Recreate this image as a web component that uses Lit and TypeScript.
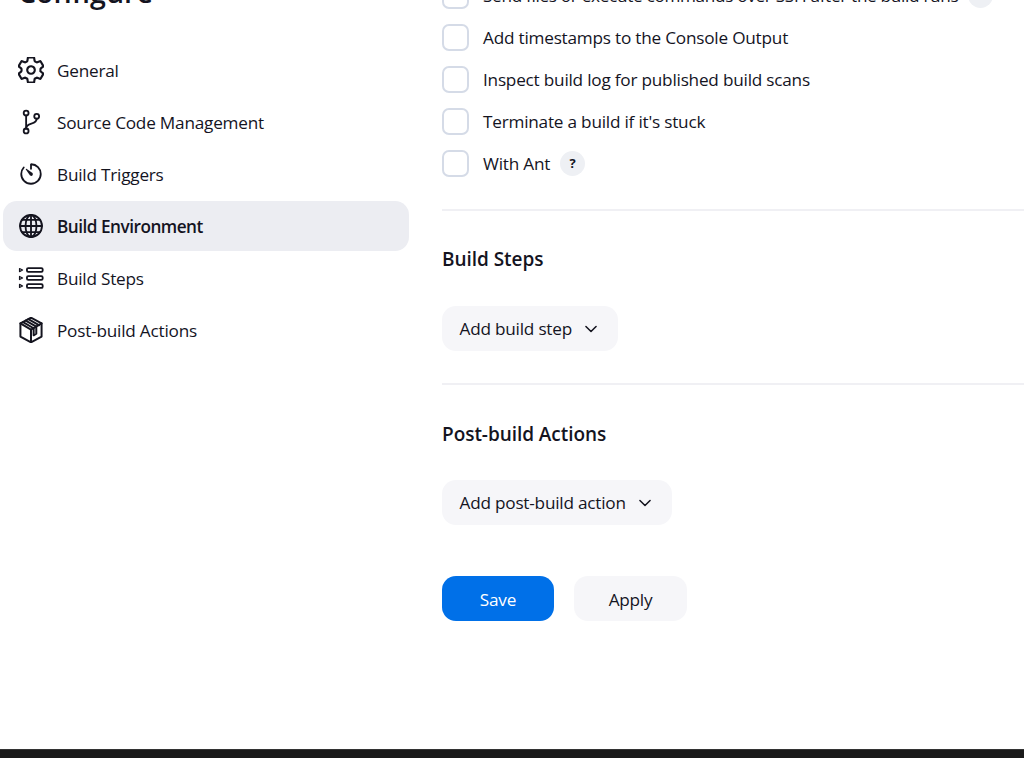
import { LitElement, html, css, svg } from "lit";
import { customElement } from "lit/decorators.js";

const icons: Record<string, unknown> = {
  gear: svg`<path d="M262.29 192.31a64 64 0 1 0 57.4 57.4 64.13 64.13 0 0 0-57.4-57.4zM416.39 256a154.34 154.34 0 0 1-1.53 20.79l45.21 35.46a10.81 10.81 0 0 1 2.45 13.75l-42.77 74a10.81 10.81 0 0 1-13.14 4.59l-44.9-18.08a16.11 16.11 0 0 0-15.17 1.75A164.48 164.48 0 0 1 325 400.8a15.94 15.94 0 0 0-8.82 12.14l-6.73 47.89a11.08 11.08 0 0 1-10.68 9.17h-85.54a11.11 11.11 0 0 1-10.69-8.87l-6.72-47.82a16.07 16.07 0 0 0-9-12.22 155.3 155.3 0 0 1-21.46-12.57 16 16 0 0 0-15.11-1.71l-44.89 18.07a10.81 10.81 0 0 1-13.14-4.58l-42.77-74a10.8 10.8 0 0 1 2.45-13.75l38.21-30a16.05 16.05 0 0 0 6-14.08c-.36-4.17-.58-8.33-.58-12.5s.21-8.27.58-12.35a16 16 0 0 0-6.07-13.94l-38.19-30A10.81 10.81 0 0 1 49.48 186l42.77-74a10.81 10.81 0 0 1 13.14-4.59l44.9 18.08a16.11 16.11 0 0 0 15.17-1.75A164.48 164.48 0 0 1 187 111.2a15.94 15.94 0 0 0 8.82-12.14l6.73-47.89A11.08 11.08 0 0 1 213.23 42h85.54a11.11 11.11 0 0 1 10.69 8.87l6.72 47.82a16.07 16.07 0 0 0 9 12.22 155.3 155.3 0 0 1 21.46 12.57 16 16 0 0 0 15.11 1.71l44.89-18.07a10.81 10.81 0 0 1 13.14 4.58l42.77 74a10.8 10.8 0 0 1-2.45 13.75l-38.21 30a16.05 16.05 0 0 0-6.05 14.08c.33 4.14.55 8.3.55 12.47z"/>`,
  branch: svg`<circle cx="160" cy="80" r="48"/><circle cx="160" cy="432" r="48"/><path d="M160 384V128"/><circle cx="368" cy="144" r="48"/><path d="M368 192c0 128-208 64-208 192"/>`,
  timer: svg`<path d="M112.91 128A191.85 191.85 0 0 0 64 254c-1.18 106.35 85.65 193.8 192 194 106.2.2 192-85.83 192-192 0-104.54-83.55-189.61-187.5-192a4.36 4.36 0 0 0-4.5 4.37V152"/><path d="M233.38 278.63l-79-113a8.13 8.13 0 0 1 11.32-11.32l113 79a32.5 32.5 0 0 1-37.25 53.26 33.21 33.21 0 0 1-8.07-7.94z" fill="currentColor" stroke="none"/>`,
  globe: svg`<circle cx="256" cy="256" r="216"/><ellipse cx="256" cy="256" rx="108" ry="216"/><path d="M256 40v432M40 256h432M82 136h348M82 376h348"/>`,
  steps: svg`<rect x="176" y="60" width="310" height="76" rx="26"/><rect x="176" y="218" width="310" height="76" rx="26"/><rect x="176" y="376" width="310" height="76" rx="26"/><path stroke-width="24" d="M30 70l60 30-60 30zM30 226l60 30-60 30zM30 382l60 30-60 30z"/>`,
  cube: svg`<path d="M256 32l192 104v240L256 480 64 376V136z"/><path d="M64 136l192 112 192-112M256 248v232"/><path d="M160 84l192 112v128l-48 28V224L112 112"/><path d="M208 58l192 110"/>`,
};

const boxes: Record<string, string> = {
  gear: "36 36 440 440",
  cube: "20 20 472 472",
};

@customElement("app-root")
export class AppRoot extends LitElement {
  static styles = css`
    :host {
      display: block;
      height: 758px;
      overflow: hidden;
      background: #fff;
      color: #14141f;
      font-family: "Open Sans", "Noto Sans", sans-serif;
      font-size: 17.2px;
      letter-spacing: -0.22px;
    }
    .page {
      display: flex;
      flex-direction: column;
      height: 758px;
    }
    .content {
      flex: 1;
      display: flex;
      min-height: 0;
      overflow: hidden;
    }
    .side {
      width: 406px;
      margin: 0 33px 0 3px;
      flex: none;
      display: flex;
      flex-direction: column;
      gap: 2px;
    }
    h1 {
      margin: -28px 0 31px 15px;
      font-size: 28.6px;
      line-height: 40px;
      font-weight: 600;
      height: 40px;
      letter-spacing: 0;
      color: #14141f;
    }
    .nav {
      display: flex;
      align-items: center;
      gap: 13px;
      height: 50px;
      padding-left: 15px;
      border-radius: 14px;
    }
    .nav.on {
      background: #ecedf2;
      font-weight: 600;
      letter-spacing: -0.5px;
    }
    .nav svg {
      width: 26px;
      height: 26px;
      flex: none;
      fill: none;
      stroke: currentColor;
      stroke-width: 36;
      stroke-linecap: round;
      stroke-linejoin: round;
    }
    .main {
      flex: 1;
      min-width: 0;
      display: flex;
      flex-direction: column;
      align-items: flex-start;
      margin-top: -26px;
    }
    .check {
      display: flex;
      align-items: center;
      gap: 14px;
      height: 42px;
      white-space: nowrap;
    }
    .box {
      width: 23px;
      height: 23px;
      border: 2px solid #d5dbe7;
      border-radius: 7px;
      flex: none;
    }
    .send {
      letter-spacing: -0.32px;
    }
    .help {
      width: 25px;
      height: 25px;
      border-radius: 50%;
      background: #eef0f4;
      font-size: 13px;
      font-weight: 700;
      display: flex;
      align-items: center;
      justify-content: center;
      margin-left: -4px;
      letter-spacing: 0;
    }
    hr {
      width: 100%;
      height: 2px;
      border: 0;
      margin: 0;
      background: #f0f0f4;
    }
    h2 {
      font-size: 19px;
      line-height: 26px;
      font-weight: 600;
      letter-spacing: -0.05px;
      margin: 0;
    }
    .btn {
      display: flex;
      align-items: center;
      justify-content: center;
      height: 45px;
      border-radius: 14px;
      background: #f6f6f9;
      color: #14141f;
    }
    .drop {
      gap: 10px;
      padding: 0 18px 0 17.5px;
    }
    .drop svg {
      width: 18px;
      height: 18px;
      fill: none;
      stroke: currentColor;
      stroke-width: 44;
      stroke-linecap: round;
      stroke-linejoin: round;
    }
    .s1 { margin-top: 25px; }
    .s2 { margin-top: 35px; }
    .b1 { margin-top: 34px; }
    .s3 { margin-top: 32px; }
    .s4 { margin-top: 36px; }
    .b2 { margin-top: 33px; }
    .actions {
      display: flex;
      gap: 20px;
      margin-top: 51px;
    }
    .actions .btn {
      box-sizing: border-box;
      padding-top: 1px;
    }
    .save {
      width: 112px;
      background: #0070e8;
      color: #fff;
      font-weight: 500;
    }
    .apply {
      width: 113px;
    }
    footer {
      height: 9px;
      flex: none;
      background: #1a1a1a;
      border-top: 1px solid #333;
      box-sizing: border-box;
    }
  `;

  render() {
    const nav = [
      ["gear", "General"],
      ["branch", "Source Code Management"],
      ["timer", "Build Triggers"],
      ["globe", "Build Environment"],
      ["steps", "Build Steps"],
      ["cube", "Post-build Actions"],
    ];
    const checks = [
      "Send files or execute commands over SSH after the build runs",
      "Add timestamps to the Console Output",
      "Inspect build log for published build scans",
      "Terminate a build if it's stuck",
    ];
    const chev = html`<svg viewBox="0 0 512 512"><path d="M112 184l144 144 144-144" /></svg>`;
    return html`<div class="page">
      <div class="content">
        <aside class="side">
          <h1>Configure</h1>
          ${nav.map(
            ([i, t]) => html`<div class="nav ${t === "Build Environment" ? "on" : ""}">
              <svg viewBox="${boxes[i] ?? "0 0 512 512"}">${icons[i]}</svg><span>${t}</span>
            </div>`,
          )}
        </aside>
        <main class="main">
          ${checks.map(
            (t, i) => html`<div class="check"><span class="box"></span><span class="${i === 0 ? "send" : ""}">${t}</span>${i === 0 ? html`<span class="help">?</span>` : ""}</div>`,
          )}
          <div class="check"><span class="box"></span><span>With Ant</span><span class="help">?</span></div>
          <hr class="s1" />
          <h2 class="s2">Build Steps</h2>
          <div class="btn drop b1">Add build step ${chev}</div>
          <hr class="s3" />
          <h2 class="s4">Post-build Actions</h2>
          <div class="btn drop b2">Add post-build action ${chev}</div>
          <div class="actions">
            <div class="btn save">Save</div>
            <div class="btn apply">Apply</div>
          </div>
        </main>
      </div>
      <footer></footer>
    </div>`;
  }
}
